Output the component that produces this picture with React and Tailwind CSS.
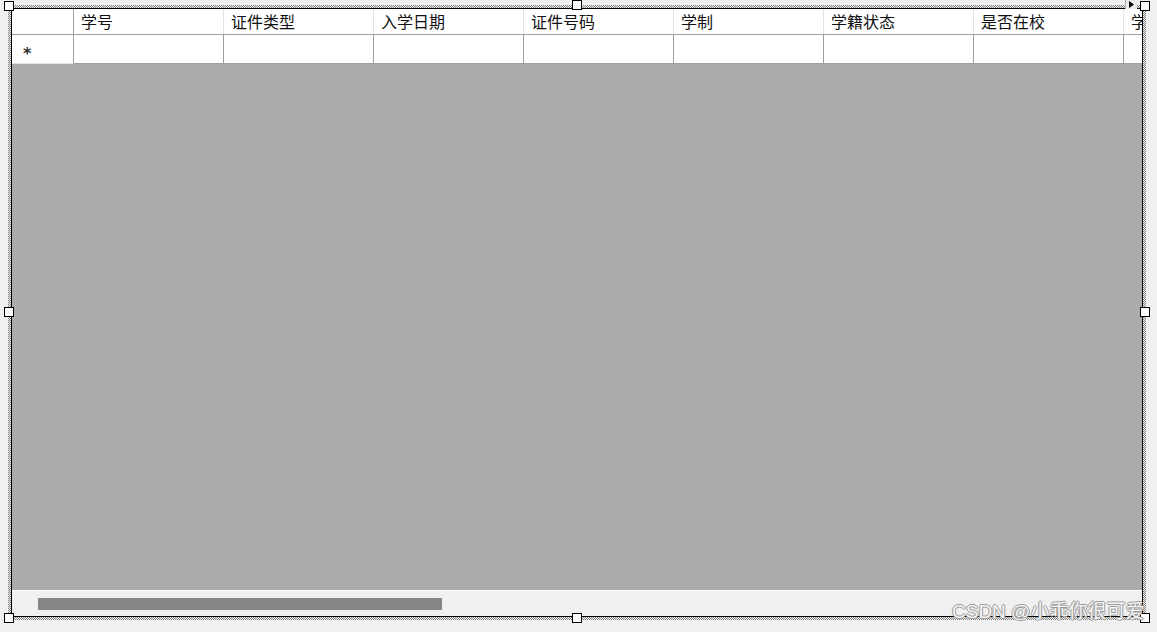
import React from "react";

const cols = ["学号", "证件类型", "入学日期", "证件号码", "学制", "学籍状态", "是否在校", "学籍号"];

function Handle({ className }) {
  return <div className={"absolute w-[10px] h-[10px] bg-white border border-black " + className} />;
}

export default function App() {
  return (
    <div className="relative w-[1157px] h-[632px] bg-[#f0f0f0] pl-[8px] pt-[5px] overflow-hidden font-['Noto_Sans_CJK_SC',sans-serif]">
      {/* hatched selection frame */}
      <div className="w-[1138px] h-[615px] p-[3px] bg-[repeating-conic-gradient(#808080_0%_25%,#f4f4f4_0%_50%)] bg-[length:2px_2px]">
        <div className="h-full border border-black bg-[#ababab] flex flex-col overflow-hidden">
          {/* header */}
          <div className="flex h-[26px] shrink-0 bg-white border-b border-[#a0a0a0] overflow-hidden">
            <div className="w-[62px] shrink-0 border-r border-[#a0a0a0]" />
            {cols.map((c) => (
              <div
                key={c}
                className="w-[150px] shrink-0 border-r border-[#e3e3e3] pl-[7px] pb-[2px] flex items-center text-[16px] leading-none text-[#111]"
              >
                {c}
              </div>
            ))}
          </div>
          {/* new row */}
          <div className="flex h-[29px] shrink-0 overflow-hidden">
            <div className="w-[62px] shrink-0 bg-white border-r border-[#a0a0a0] border-b border-b-[#e3e3e3] flex items-start pl-[11px] pt-[11px]">
              <span className="text-[16px] font-bold text-[#333] font-['DejaVu_Sans',sans-serif] leading-none">*</span>
            </div>
            {cols.map((c) => (
              <div key={c} className="w-[150px] shrink-0 bg-white border-r border-b border-[#a0a0a0]" />
            ))}
          </div>
          {/* empty area */}
          <div className="flex-1" />
          {/* horizontal scrollbar */}
          <div className="h-[26px] shrink-0 border-t border-white bg-[#f0f0f0] pl-[26px] pt-[7px]">
            <div className="w-[404px] h-[12px] bg-[#868686]" />
          </div>
        </div>
      </div>

      {/* smart tag glyph */}
      <div className="absolute left-[1125px] top-0 w-[12px] h-[9px] bg-[#ececec] border-l border-[#b0b0b0] flex items-center justify-center">
        <svg width="5" height="7" viewBox="0 0 5 7">
          <path d="M0 0 L5 3.5 L0 7 Z" fill="#000" />
        </svg>
      </div>

      {/* selection handles */}
      <Handle className="left-[4px] top-[1px]" />
      <Handle className="left-[572px] top-0" />
      <Handle className="left-[1140px] top-[1px]" />
      <Handle className="left-[4px] top-[307px]" />
      <Handle className="left-[1140px] top-[307px]" />
      <Handle className="left-[4px] top-[613px]" />
      <Handle className="left-[572px] top-[613px]" />
      <Handle className="left-[1140px] top-[613px]" />

      {/* watermark */}
      <div className="absolute left-[952px] top-[602px] text-[19px] leading-none text-[#f6f6f6] font-['Liberation_Sans','Noto_Sans_CJK_SC',sans-serif] [text-shadow:1px_0_#9a9a9a,-1px_0_#9a9a9a,0_1px_#9a9a9a,0_-1px_#9a9a9a] whitespace-nowrap">
        CSDN @小乖你很可爱
      </div>
    </div>
  );
}
